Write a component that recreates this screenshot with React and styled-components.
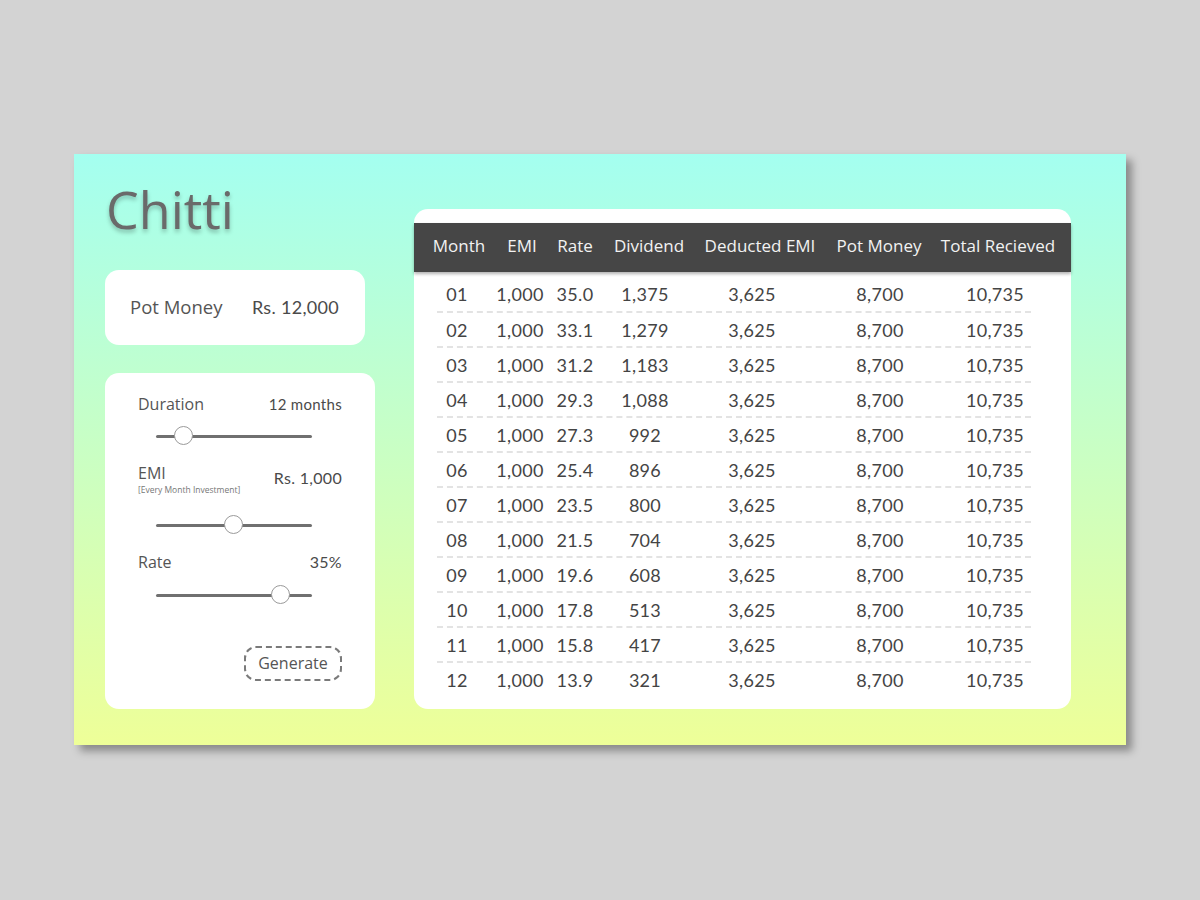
import React from 'react'
import styled, { createGlobalStyle } from 'styled-components'

const GlobalStyle = createGlobalStyle`
  html, body { margin: 0; padding: 0; }
  body {
    background: #d3d3d3;
    font-family: "Open Sans", "Noto Sans", sans-serif;
  }
`

const rates = ['35.0', '33.1', '31.2', '29.3', '27.3', '25.4', '23.5', '21.5', '19.6', '17.8', '15.8', '13.9']
const dividends = ['1,375', '1,279', '1,183', '1,088', '992', '896', '800', '704', '608', '513', '417', '321']

const rows = rates.map((rate, i) => ({
  month: String(i + 1).padStart(2, '0'),
  emi: '1,000',
  rate,
  dividend: dividends[i],
  deducted: '3,625',
  pot: '8,700',
  total: '10,735',
}))

const headers = ['Month', 'EMI', 'Rate', 'Dividend', 'Deducted EMI', 'Pot Money', 'Total Recieved']

const App = () => {
  return (
    <>
      <GlobalStyle />
      <Page>
        <Board>
          <Side>
            <Title>Chitti</Title>
            <PotCard>
              <PotLabel>Pot Money</PotLabel>
              <Amount size={18}>Rs. 12,000</Amount>
            </PotCard>
            <Controls>
              <ControlRow>
                <Label>Duration</Label>
                <Amount size={15}>12 months</Amount>
              </ControlRow>
              <Slider value={18} gap={11} />

              <ControlRow>
                <div>
                  <Label>EMI</Label>
                  <Hint>[Every Month Investment]</Hint>
                </div>
                <Amount size={16} top={5}>Rs. 1,000</Amount>
              </ControlRow>
              <Slider value={50} gap={20} />

              <ControlRow>
                <Label>Rate</Label>
                <Amount size={16}>35%</Amount>
              </ControlRow>
              <Slider value={80} gap={12} />

              <Actions>
                <Generate>Generate</Generate>
              </Actions>
            </Controls>
          </Side>

          <TableCard>
            <HeadRow>
              {headers.map(h => (
                <HeadCell key={h}>{h}</HeadCell>
              ))}
            </HeadRow>
            <Body>
              {rows.map(r => (
                <Row key={r.month}>
                  <Cell>{r.month}</Cell>
                  <Cell>{r.emi}</Cell>
                  <Cell>{r.rate}</Cell>
                  <Cell>{r.dividend}</Cell>
                  <Cell>{r.deducted}</Cell>
                  <Cell>{r.pot}</Cell>
                  <Cell>{r.total}</Cell>
                </Row>
              ))}
            </Body>
          </TableCard>
        </Board>
      </Page>
    </>
  )
}

const Slider = ({ value, gap }) => (
  <SliderWrap gap={gap}>
    <Track />
    <Thumb style={{ left: `${value}%` }} />
  </SliderWrap>
)

const Page = styled.div`
  min-height: 100vh;
  display: flex;
  align-items: center;
  justify-content: center;
`

const Board = styled.div`
  width: 1052px;
  box-sizing: border-box;
  padding: 23px 55px 36px 31px;
  margin-top: -1px;
  background: linear-gradient(180deg, #a4fff0 0%, #eeff98 100%);
  box-shadow: 6px 6px 8px rgba(0, 0, 0, 0.35);
  display: flex;
  align-items: flex-end;
  justify-content: space-between;
`

const Side = styled.div`
  width: 270px;
  display: flex;
  flex-direction: column;
`

const Title = styled.h1`
  margin: 0 0 29px 1px;
  font-family: "Open Sans", sans-serif;
  font-weight: 400;
  font-size: 52px;
  line-height: 64px;
  color: #6a6a6a;
  text-shadow: 0 3px 4px rgba(0, 0, 0, 0.25);
`

const PotCard = styled.div`
  width: 260px;
  height: 75px;
  box-sizing: border-box;
  padding: 0 26px 2px 25px;
  background: #fff;
  border-radius: 14px;
  display: flex;
  align-items: center;
  justify-content: space-between;
  margin-bottom: 28px;
`

const PotLabel = styled.span`
  font-size: 18.5px;
  color: #555;
`

const Amount = styled.span`
  font-family: Lato, "DejaVu Sans", sans-serif;
  font-size: ${p => p.size}px;
  color: #4a4a4a;
  margin-top: ${p => p.top || 0}px;
  letter-spacing: 0.3px;
`

const Controls = styled.div`
  height: 336px;
  box-sizing: border-box;
  padding: 20px 33px 28px 33px;
  background: #fff;
  border-radius: 14px;
  display: flex;
  flex-direction: column;
`

const ControlRow = styled.div`
  display: flex;
  justify-content: space-between;
  align-items: flex-start;
  line-height: 22px;
`

const Label = styled.div`
  font-size: 16px;
  color: #555;
  line-height: 22px;
`

const Hint = styled.div`
  font-size: 8.5px;
  line-height: 11px;
  color: #777;
`

const SliderWrap = styled.div`
  position: relative;
  margin: ${p => p.gap}px 30px 16px 18px;
  height: 20px;
`

const Track = styled.div`
  position: absolute;
  left: 0;
  right: 0;
  top: 8.5px;
  height: 3px;
  border-radius: 2px;
  background: #707070;
`

const Thumb = styled.div`
  position: absolute;
  top: 0;
  width: 19px;
  height: 19px;
  margin-left: -10px;
  box-sizing: border-box;
  border: 1px solid #9a9a9a;
  border-radius: 50%;
  background: #fff;
`

const Actions = styled.div`
  margin-top: auto;
  display: flex;
  justify-content: flex-end;
`

const Generate = styled.button`
  width: 98px;
  height: 35px;
  box-sizing: border-box;
  border: 2px dashed #7a7a7a;
  border-radius: 12px;
  background: #fff;
  font-family: "Open Sans", sans-serif;
  font-size: 16px;
  color: #555;
  cursor: pointer;
  padding: 0 0 2px 0;
`

const TableCard = styled.div`
  width: 657px;
  box-sizing: border-box;
  padding: 14px 0 13px 0;
  background: #fff;
  border-radius: 14px;
`

const HeadRow = styled.div`
  display: grid;
  grid-template-columns: 78px 48px 58px 90px 132px 106px 132px;
  height: 49px;
  box-sizing: border-box;
  padding: 0 0 5px 6px;
  background: #464646;
  box-shadow: 0 2px 3px rgba(0, 0, 0, 0.3);
`

const HeadCell = styled.div`
  display: flex;
  align-items: center;
  justify-content: center;
  white-space: nowrap;
  font-size: 17px;
  color: #f2f2f2;
`

const Body = styled.div`
  padding: 4px 0 0 23px;
`

const Row = styled.div`
  display: grid;
  grid-template-columns: 40px 86px 24px 116px 98px 158px 72px;
  width: 594px;
  height: 35px;
  box-sizing: border-box;
  & + & {
    border-top: 2px dashed #e3e3e3;
  }
`

const Cell = styled.div`
  display: flex;
  align-items: center;
  justify-content: center;
  white-space: nowrap;
  font-family: Lato, "DejaVu Sans", sans-serif;
  font-size: 18px;
  color: #444;
  letter-spacing: 0.3px;
`

export default App
